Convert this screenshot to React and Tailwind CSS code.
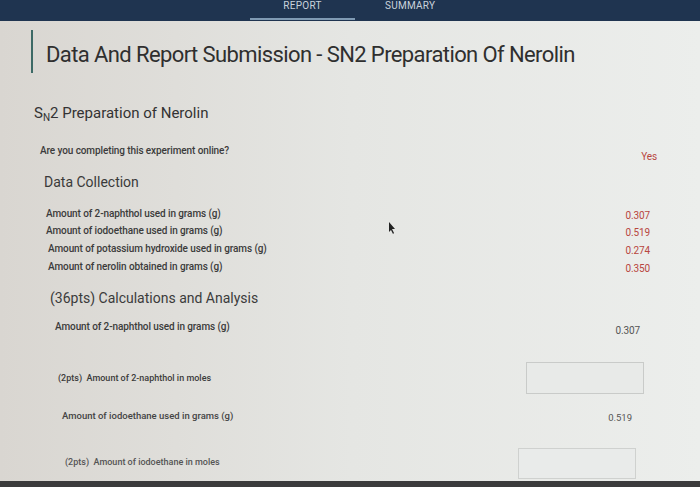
import React from 'react';

const dataRows = [
  ['Amount of 2-naphthol used in grams (g)', '0.307'],
  ['Amount of iodoethane used in grams (g)', '0.519'],
  ['Amount of potassium hydroxide used in grams (g)', '0.274'],
  ['Amount of nerolin obtained in grams (g)', '0.350'],
];

const Cursor = () => (
  <svg width="8" height="12" viewBox="0 0 8 12" className="absolute left-[388px] top-[222px]">
    <path d="M1 0 L1 10 L3 8 L5 12 L6 11 L4 7 L7 7 Z" fill="#222" />
  </svg>
);

export default function App() {
  return (
    <div
      className="relative w-[700px] h-[487px] overflow-hidden bg-gradient-to-r from-[#d9d6d1] via-[#e5e6e3] to-[#eceeec] text-[#3b3b3b]"
      style={{ fontFamily: 'Roboto, "Liberation Sans", sans-serif' }}
    >
      {/* top nav */}
      <div className="relative h-[21px] bg-[#1f3450] flex text-[10px] tracking-wide text-[#c9d2dc]">
        <div className="ml-[250px] w-[105px] flex justify-center items-start -mt-[2px]">REPORT</div>
        <div className="ml-[30px] flex items-start -mt-[2px]">SUMMARY</div>
        <div className="absolute left-[250px] top-[18px] w-[105px] h-[2px] bg-[#7f9ab3]" />
      </div>

      {/* title */}
      <div className="flex items-start mt-[9px] ml-[31px]">
        <div className="w-[2px] h-[43px] bg-[#3d6a66]" />
        <h1 className="ml-[13px] mt-[8px] text-[22px] tracking-[-0.6px] text-[#2f2f2f]">
          Data And Report Submission - SN2 Preparation Of Nerolin
        </h1>
      </div>

      <div className="ml-[34px] mt-[29px] text-[15px] text-[#333]">
        S<sub className="text-[10px]">N</sub>2 Preparation of Nerolin
      </div>

      <div className="flex justify-between items-start ml-[40px] mr-[43px] mt-[18px] text-[10px] font-medium tracking-[-0.1px]">
        <span>Are you completing this experiment online?</span>
        <span className="mt-[6px] text-[#b8463e] font-normal">Yes</span>
      </div>

      <div className="ml-[44px] mt-[8px] text-[14px] text-[#3a3a3a]">Data Collection</div>

      <div className="flex flex-col mt-[12px] ml-[46px] mr-[50px] text-[10px] font-medium tracking-[-0.1px] leading-[17.7px]">
        {dataRows.map(([label, val], i) => (
          <div key={i} className="flex justify-between">
            <span className={i > 1 ? 'ml-[2px]' : ''}>{label}</span>
            <span className="text-[#b8463e] font-normal translate-y-[2px]">{val}</span>
          </div>
        ))}
      </div>

      <div className="ml-[50px] mt-[13px] text-[14px]">(36pts) Calculations and Analysis</div>

      <div className="flex justify-between ml-[55px] mr-[60px] mt-[10px] text-[10px] font-medium tracking-[-0.1px]">
        <span>Amount of 2-naphthol used in grams (g)</span>
        <span className="translate-y-[4px] text-[#555] font-normal">0.307</span>
      </div>

      <div className="flex justify-between items-center ml-[58px] mr-[56px] mt-[28px] text-[9px] font-medium">
        <span>(2pts)&nbsp; Amount of 2-naphthol in moles</span>
        <div className="w-[118px] h-[32px] border border-[#c9cbc9] bg-[#e8eae8]" />
      </div>

      <div className="flex justify-between ml-[62px] mr-[68px] mt-[15px] text-[9.5px] font-medium text-[#444]">
        <span>Amount of iodoethane used in grams (g)</span>
        <span className="translate-y-[2px] text-[#555] font-normal">0.519</span>
      </div>

      <div className="flex justify-between items-center ml-[65px] mr-[64px] mt-[24px] text-[9px] font-medium text-[#555]">
        <span>(2pts)&nbsp; Amount of iodoethane in moles</span>
        <div className="w-[118px] h-[31px] border border-[#cfd1cf] bg-[#e9ebea]" />
      </div>

      <div className="absolute left-0 right-0 bottom-0 h-[6px] bg-[#3b3b3c]" />
      <Cursor />
    </div>
  );
}
